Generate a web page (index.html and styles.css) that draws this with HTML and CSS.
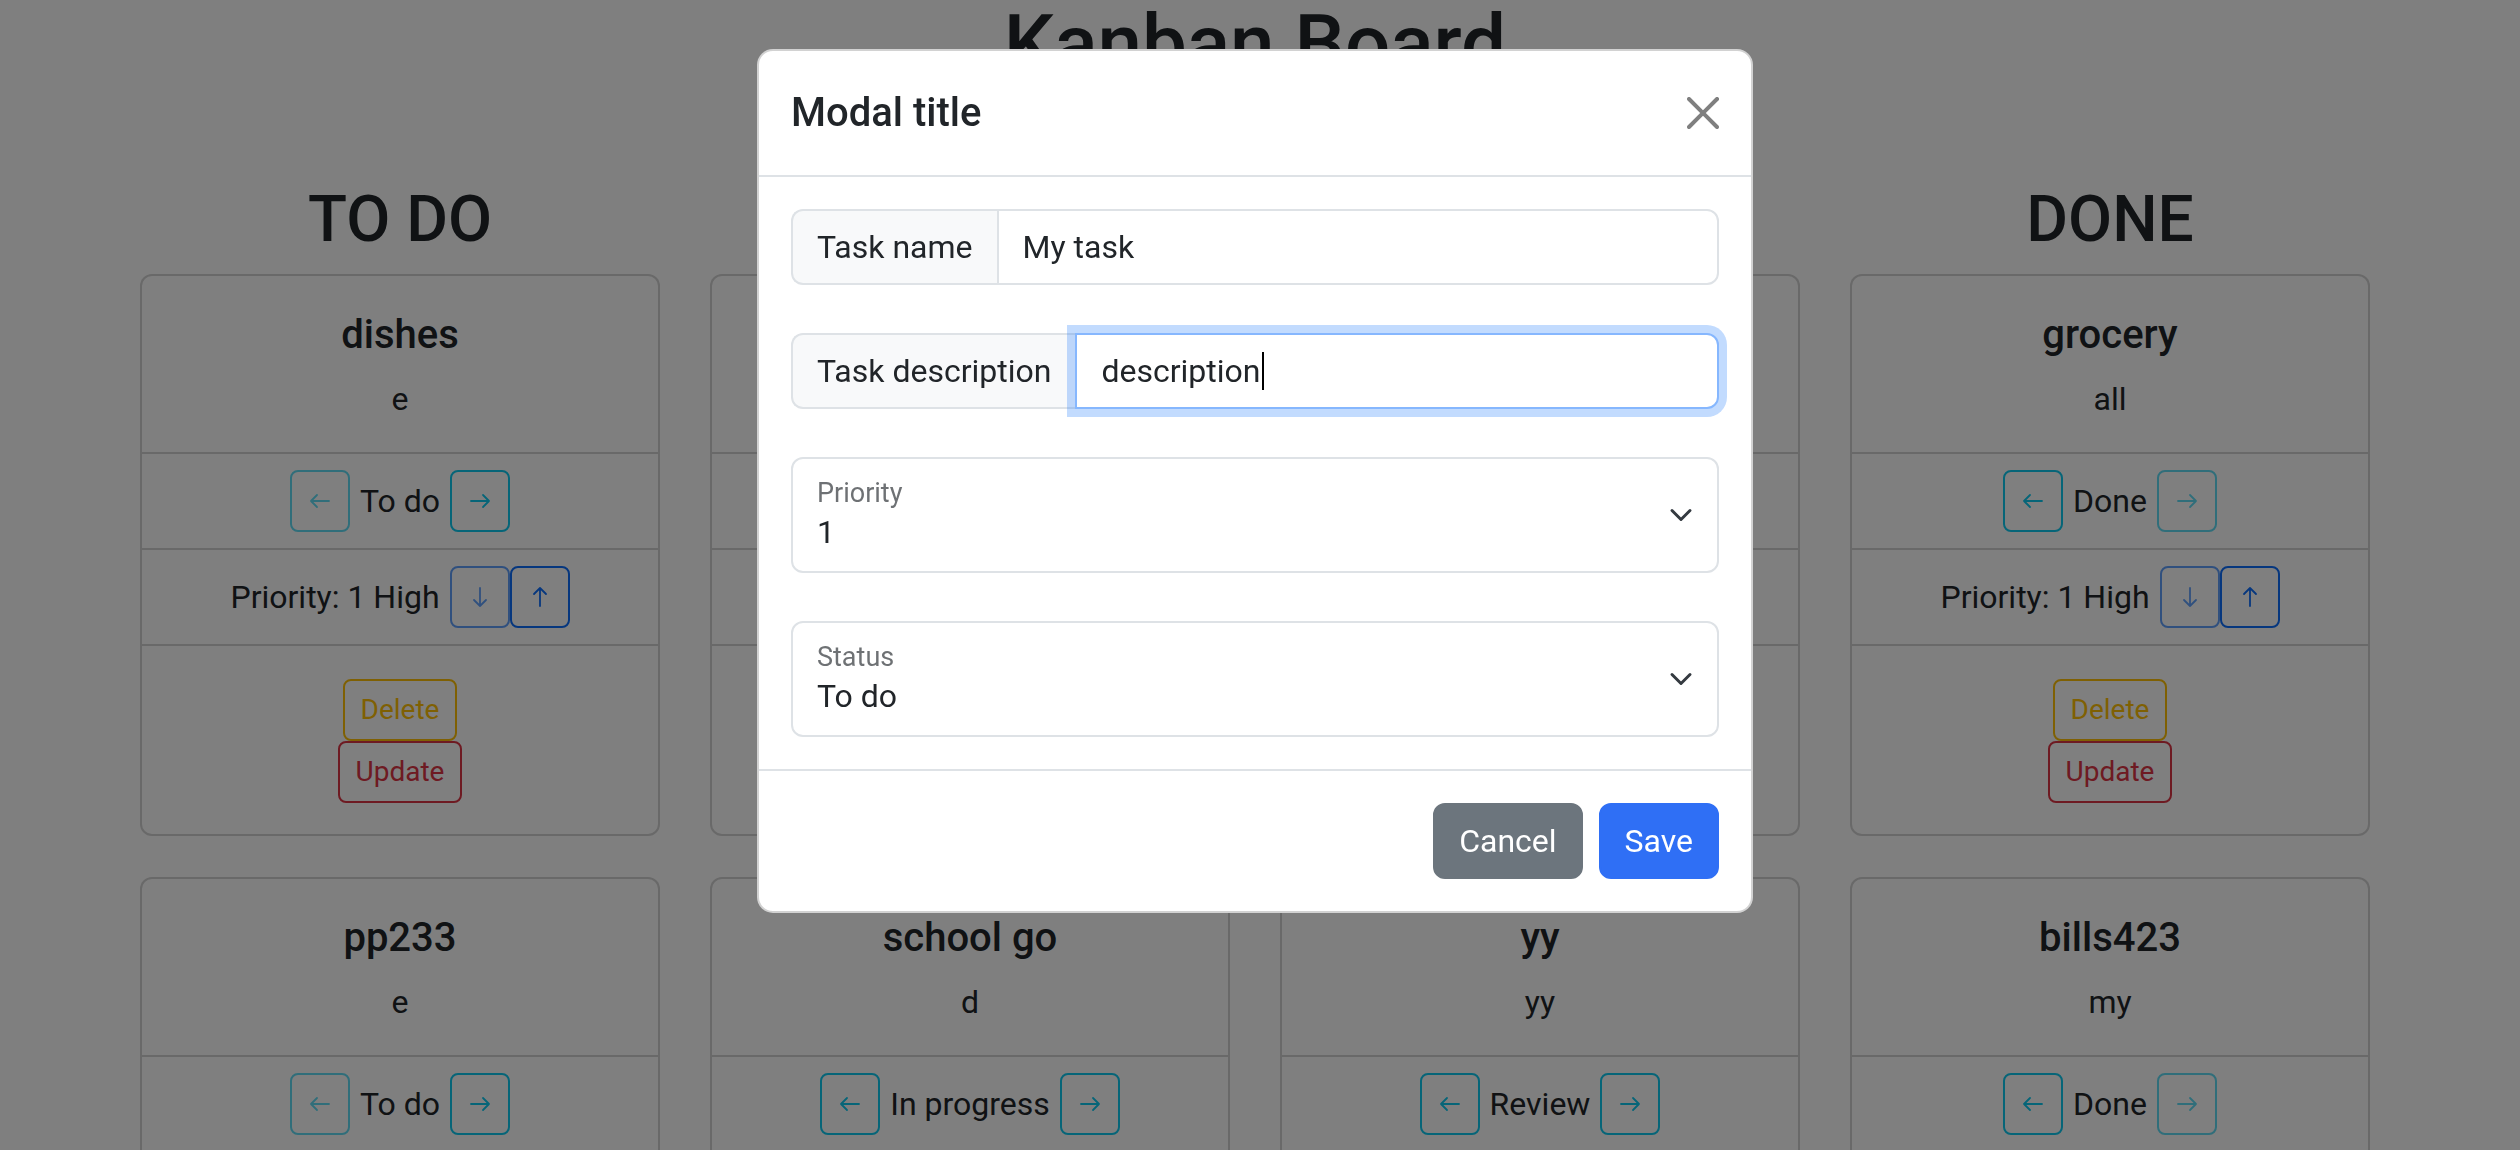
FILE: index.html
```html
<!DOCTYPE html>
<html lang="en">
<head>
<meta charset="utf-8">
<title>Kanban Board</title>
<link rel="stylesheet" href="styles.css">
</head>
<body>
<div class="page">
  <h1 class="page-title">Kanban Board</h1>
  <div class="board">
    <section class="column">
      <h2 class="column-title">TO DO</h2>
      <div class="card">
        <div class="card-body">
          <h5 class="card-title">dishes</h5>
          <p class="card-text">e</p>
        </div>
        <div class="list-group">
          <div class="list-item">
            <button class="btn btn-sm btn-arrow info disabled"><svg viewBox="0 0 24 24" width="24" height="24"><path d="M21 12H3M9 6l-6 6 6 6" fill="none" stroke="currentColor" stroke-width="1.8" stroke-linecap="round" stroke-linejoin="round"/></svg></button>
            <span>To do</span>
            <button class="btn btn-sm btn-arrow info"><svg viewBox="0 0 24 24" width="24" height="24"><path d="M3 12h18M15 6l6 6-6 6" fill="none" stroke="currentColor" stroke-width="1.8" stroke-linecap="round" stroke-linejoin="round"/></svg></button>
          </div>
          <div class="list-item">
            <span class="prio-text">Priority: 1 High</span>
            <span class="btn-pair">
              <button class="btn btn-sm btn-arrow primary disabled"><svg viewBox="0 0 24 24" width="24" height="24"><path d="M12 3v18M6 15l6 6 6-6" fill="none" stroke="currentColor" stroke-width="1.8" stroke-linecap="round" stroke-linejoin="round"/></svg></button>
              <button class="btn btn-sm btn-arrow primary"><svg viewBox="0 0 24 24" width="24" height="24"><path d="M12 21V3M6 9l6-6 6 6" fill="none" stroke="currentColor" stroke-width="1.8" stroke-linecap="round" stroke-linejoin="round"/></svg></button>
            </span>
          </div>
        </div>
        <div class="card-actions">
          <button class="btn btn-sm warning">Delete</button>
          <button class="btn btn-sm danger">Update</button>
        </div>
      </div>
      <div class="card">
        <div class="card-body">
          <h5 class="card-title">pp233</h5>
          <p class="card-text">e</p>
        </div>
        <div class="list-group">
          <div class="list-item">
            <button class="btn btn-sm btn-arrow info disabled"><svg viewBox="0 0 24 24" width="24" height="24"><path d="M21 12H3M9 6l-6 6 6 6" fill="none" stroke="currentColor" stroke-width="1.8" stroke-linecap="round" stroke-linejoin="round"/></svg></button>
            <span>To do</span>
            <button class="btn btn-sm btn-arrow info"><svg viewBox="0 0 24 24" width="24" height="24"><path d="M3 12h18M15 6l6 6-6 6" fill="none" stroke="currentColor" stroke-width="1.8" stroke-linecap="round" stroke-linejoin="round"/></svg></button>
          </div>
          <div class="list-item">
            <span class="prio-text">Priority: 2 Medium</span>
          </div>
        </div>
      </div>
    </section>

    <section class="column">
      <h2 class="column-title">IN PROGRESS</h2>
      <div class="card">
        <div class="card-body">
          <h5 class="card-title">cooking</h5>
          <p class="card-text">dinner</p>
        </div>
        <div class="list-group">
          <div class="list-item">
            <button class="btn btn-sm btn-arrow info"><svg viewBox="0 0 24 24" width="24" height="24"><path d="M21 12H3M9 6l-6 6 6 6" fill="none" stroke="currentColor" stroke-width="1.8" stroke-linecap="round" stroke-linejoin="round"/></svg></button>
            <span>In progress</span>
            <button class="btn btn-sm btn-arrow info"><svg viewBox="0 0 24 24" width="24" height="24"><path d="M3 12h18M15 6l6 6-6 6" fill="none" stroke="currentColor" stroke-width="1.8" stroke-linecap="round" stroke-linejoin="round"/></svg></button>
          </div>
          <div class="list-item">
            <span class="prio-text">Priority: 1 High</span>
            <span class="btn-pair">
              <button class="btn btn-sm btn-arrow primary disabled"><svg viewBox="0 0 24 24" width="24" height="24"><path d="M12 3v18M6 15l6 6 6-6" fill="none" stroke="currentColor" stroke-width="1.8" stroke-linecap="round" stroke-linejoin="round"/></svg></button>
              <button class="btn btn-sm btn-arrow primary"><svg viewBox="0 0 24 24" width="24" height="24"><path d="M12 21V3M6 9l6-6 6 6" fill="none" stroke="currentColor" stroke-width="1.8" stroke-linecap="round" stroke-linejoin="round"/></svg></button>
            </span>
          </div>
        </div>
        <div class="card-actions">
          <button class="btn btn-sm warning">Delete</button>
          <button class="btn btn-sm danger">Update</button>
        </div>
      </div>
      <div class="card">
        <div class="card-body">
          <h5 class="card-title">school go</h5>
          <p class="card-text">d</p>
        </div>
        <div class="list-group">
          <div class="list-item">
            <button class="btn btn-sm btn-arrow info"><svg viewBox="0 0 24 24" width="24" height="24"><path d="M21 12H3M9 6l-6 6 6 6" fill="none" stroke="currentColor" stroke-width="1.8" stroke-linecap="round" stroke-linejoin="round"/></svg></button>
            <span>In progress</span>
            <button class="btn btn-sm btn-arrow info"><svg viewBox="0 0 24 24" width="24" height="24"><path d="M3 12h18M15 6l6 6-6 6" fill="none" stroke="currentColor" stroke-width="1.8" stroke-linecap="round" stroke-linejoin="round"/></svg></button>
          </div>
          <div class="list-item">
            <span class="prio-text">Priority: 2 Medium</span>
          </div>
        </div>
      </div>
    </section>

    <section class="column">
      <h2 class="column-title">REVIEW</h2>
      <div class="card">
        <div class="card-body">
          <h5 class="card-title">laundry</h5>
          <p class="card-text">wash</p>
        </div>
        <div class="list-group">
          <div class="list-item">
            <button class="btn btn-sm btn-arrow info"><svg viewBox="0 0 24 24" width="24" height="24"><path d="M21 12H3M9 6l-6 6 6 6" fill="none" stroke="currentColor" stroke-width="1.8" stroke-linecap="round" stroke-linejoin="round"/></svg></button>
            <span>Review</span>
            <button class="btn btn-sm btn-arrow info"><svg viewBox="0 0 24 24" width="24" height="24"><path d="M3 12h18M15 6l6 6-6 6" fill="none" stroke="currentColor" stroke-width="1.8" stroke-linecap="round" stroke-linejoin="round"/></svg></button>
          </div>
          <div class="list-item">
            <span class="prio-text">Priority: 1 High</span>
            <span class="btn-pair">
              <button class="btn btn-sm btn-arrow primary disabled"><svg viewBox="0 0 24 24" width="24" height="24"><path d="M12 3v18M6 15l6 6 6-6" fill="none" stroke="currentColor" stroke-width="1.8" stroke-linecap="round" stroke-linejoin="round"/></svg></button>
              <button class="btn btn-sm btn-arrow primary"><svg viewBox="0 0 24 24" width="24" height="24"><path d="M12 21V3M6 9l6-6 6 6" fill="none" stroke="currentColor" stroke-width="1.8" stroke-linecap="round" stroke-linejoin="round"/></svg></button>
            </span>
          </div>
        </div>
        <div class="card-actions">
          <button class="btn btn-sm warning">Delete</button>
          <button class="btn btn-sm danger">Update</button>
        </div>
      </div>
      <div class="card">
        <div class="card-body">
          <h5 class="card-title">yy</h5>
          <p class="card-text">yy</p>
        </div>
        <div class="list-group">
          <div class="list-item">
            <button class="btn btn-sm btn-arrow info"><svg viewBox="0 0 24 24" width="24" height="24"><path d="M21 12H3M9 6l-6 6 6 6" fill="none" stroke="currentColor" stroke-width="1.8" stroke-linecap="round" stroke-linejoin="round"/></svg></button>
            <span>Review</span>
            <button class="btn btn-sm btn-arrow info"><svg viewBox="0 0 24 24" width="24" height="24"><path d="M3 12h18M15 6l6 6-6 6" fill="none" stroke="currentColor" stroke-width="1.8" stroke-linecap="round" stroke-linejoin="round"/></svg></button>
          </div>
          <div class="list-item">
            <span class="prio-text">Priority: 2 Medium</span>
          </div>
        </div>
      </div>
    </section>

    <section class="column">
      <h2 class="column-title">DONE</h2>
      <div class="card">
        <div class="card-body">
          <h5 class="card-title">grocery</h5>
          <p class="card-text">all</p>
        </div>
        <div class="list-group">
          <div class="list-item">
            <button class="btn btn-sm btn-arrow info"><svg viewBox="0 0 24 24" width="24" height="24"><path d="M21 12H3M9 6l-6 6 6 6" fill="none" stroke="currentColor" stroke-width="1.8" stroke-linecap="round" stroke-linejoin="round"/></svg></button>
            <span>Done</span>
            <button class="btn btn-sm btn-arrow info disabled"><svg viewBox="0 0 24 24" width="24" height="24"><path d="M3 12h18M15 6l6 6-6 6" fill="none" stroke="currentColor" stroke-width="1.8" stroke-linecap="round" stroke-linejoin="round"/></svg></button>
          </div>
          <div class="list-item">
            <span class="prio-text">Priority: 1 High</span>
            <span class="btn-pair">
              <button class="btn btn-sm btn-arrow primary disabled"><svg viewBox="0 0 24 24" width="24" height="24"><path d="M12 3v18M6 15l6 6 6-6" fill="none" stroke="currentColor" stroke-width="1.8" stroke-linecap="round" stroke-linejoin="round"/></svg></button>
              <button class="btn btn-sm btn-arrow primary"><svg viewBox="0 0 24 24" width="24" height="24"><path d="M12 21V3M6 9l6-6 6 6" fill="none" stroke="currentColor" stroke-width="1.8" stroke-linecap="round" stroke-linejoin="round"/></svg></button>
            </span>
          </div>
        </div>
        <div class="card-actions">
          <button class="btn btn-sm warning">Delete</button>
          <button class="btn btn-sm danger">Update</button>
        </div>
      </div>
      <div class="card">
        <div class="card-body">
          <h5 class="card-title">bills423</h5>
          <p class="card-text">my</p>
        </div>
        <div class="list-group">
          <div class="list-item">
            <button class="btn btn-sm btn-arrow info"><svg viewBox="0 0 24 24" width="24" height="24"><path d="M21 12H3M9 6l-6 6 6 6" fill="none" stroke="currentColor" stroke-width="1.8" stroke-linecap="round" stroke-linejoin="round"/></svg></button>
            <span>Done</span>
            <button class="btn btn-sm btn-arrow info disabled"><svg viewBox="0 0 24 24" width="24" height="24"><path d="M3 12h18M15 6l6 6-6 6" fill="none" stroke="currentColor" stroke-width="1.8" stroke-linecap="round" stroke-linejoin="round"/></svg></button>
          </div>
          <div class="list-item">
            <span class="prio-text">Priority: 2 Medium</span>
          </div>
        </div>
      </div>
    </section>
  </div>
</div>

<div class="backdrop"></div>

<div class="modal">
  <div class="modal-header">
    <h1 class="modal-title">Modal title</h1>
    <button class="btn-close" aria-label="Close"><svg viewBox="0 0 16 16" width="32" height="32"><path d="M.293.293a1 1 0 0 1 1.414 0L8 6.586 14.293.293a1 1 0 1 1 1.414 1.414L9.414 8l6.293 6.293a1 1 0 0 1-1.414 1.414L8 9.414l-6.293 6.293a1 1 0 0 1-1.414-1.414L6.586 8 .293 1.707a1 1 0 0 1 0-1.414z" fill="currentColor"/></svg></button>
  </div>
  <div class="modal-body">
    <div class="input-group">
      <span class="addon">Task name</span>
      <div class="input">My task</div>
    </div>
    <div class="input-group">
      <span class="addon">Task description</span>
      <div class="input focused">description<span class="caret"></span></div>
    </div>
    <div class="floating-select">
      <div class="fs-text">
        <span class="fs-label">Priority</span>
        <span class="fs-value">1</span>
      </div>
      <svg class="chevron" viewBox="0 0 16 16" width="24" height="24"><path d="m2 5 6 6 6-6" fill="none" stroke="#343a40" stroke-width="2" stroke-linecap="round" stroke-linejoin="round"/></svg>
    </div>
    <div class="floating-select">
      <div class="fs-text">
        <span class="fs-label">Status</span>
        <span class="fs-value">To do</span>
      </div>
      <svg class="chevron" viewBox="0 0 16 16" width="24" height="24"><path d="m2 5 6 6 6-6" fill="none" stroke="#343a40" stroke-width="2" stroke-linecap="round" stroke-linejoin="round"/></svg>
    </div>
  </div>
  <div class="modal-footer">
    <button class="btn btn-secondary">Cancel</button>
    <button class="btn btn-primary">Save</button>
  </div>
</div>
</body>
</html>
```

FILE: styles.css
```css
* { box-sizing: border-box; }

html, body {
  margin: 0;
  height: 100%;
  overflow: hidden;
}

body {
  font-family: Roboto, "Liberation Sans", sans-serif;
  font-size: 32px;
  line-height: 48px;
  color: #212529;
  background: #fff;
}

.page {
  width: 2230px;
  margin-left: 140px;
}

.page-title {
  margin: -4px 0 89px;
  font-size: 80px;
  font-weight: 500;
  line-height: 96px;
  text-align: center;
}

.board {
  display: grid;
  grid-template-columns: repeat(4, 520px);
  column-gap: 50px;
}

.column {
  display: flex;
  flex-direction: column;
  gap: 41px;
}

.column-title {
  margin: 0 0 -25px;
  font-size: 64px;
  font-weight: 500;
  line-height: 77px;
  text-align: center;
}

.card {
  border: 2px solid rgba(0, 0, 0, 0.175);
  border-radius: 12px;
  text-align: center;
  background: #fff;
}

.card-body {
  padding: 35px 32px 29px;
}

.card-title {
  margin: 0 0 16px;
  font-size: 40px;
  font-weight: 500;
  line-height: 48px;
}

.card-text {
  margin: 0;
}

.list-group {
  border-top: 2px solid rgba(0, 0, 0, 0.175);
  border-bottom: 2px solid rgba(0, 0, 0, 0.175);
}

.list-item {
  display: flex;
  align-items: center;
  justify-content: center;
  gap: 10px;
  padding: 16px 32px;
  min-height: 94px;
}

.list-item + .list-item {
  border-top: 2px solid rgba(0, 0, 0, 0.175);
}

.btn-pair {
  display: inline-flex;
}

.card-actions {
  display: flex;
  flex-direction: column;
  align-items: center;
  padding: 33px 32px 31px;
}

.btn {
  display: inline-flex;
  align-items: center;
  justify-content: center;
  font-family: inherit;
  font-size: 32px;
  line-height: 48px;
  padding: 12px 24px;
  border: 2px solid transparent;
  border-radius: 12px;
  background: transparent;
  cursor: pointer;
}

.btn-sm {
  font-size: 28px;
  line-height: 42px;
  padding: 8px 16px;
  border-radius: 8px;
}

.btn-arrow {
  width: 60px;
  height: 62px;
  padding: 0;
}

.btn-arrow svg {
  display: block;
}

.info {
  color: #0dcaf0;
  border-color: #0dcaf0;
}

.primary {
  color: #0d6efd;
  border-color: #0d6efd;
}

.warning {
  color: #ffc107;
  border-color: #ffc107;
}

.danger {
  color: #dc3545;
  border-color: #dc3545;
}

.disabled {
  opacity: 0.65;
}

.backdrop {
  position: fixed;
  inset: 0;
  background: rgba(0, 0, 0, 0.5);
}

.modal {
  position: fixed;
  top: 49px;
  left: 757px;
  width: 996px;
  background: #fff;
  border: 2px solid rgba(0, 0, 0, 0.175);
  border-radius: 16px;
}

.modal-header {
  display: flex;
  align-items: center;
  justify-content: space-between;
  padding: 32px;
  border-bottom: 2px solid #dee2e6;
}

.modal-title {
  margin: 0;
  font-size: 40px;
  font-weight: 500;
  line-height: 60px;
}

.btn-close {
  display: flex;
  padding: 16px;
  margin: -16px -16px -16px auto;
  border: 0;
  background: transparent;
  color: rgba(0, 0, 0, 0.5);
}

.modal-body {
  display: flex;
  flex-direction: column;
  gap: 48px;
  padding: 32px;
}

.input-group {
  display: flex;
  height: 76px;
}

.addon {
  padding: 12px 24px;
  background: #f8f9fa;
  border: 2px solid #dee2e6;
  border-right: 0;
  border-radius: 12px 0 0 12px;
  white-space: nowrap;
}

.input {
  flex: 1;
  display: flex;
  align-items: center;
  padding: 12px 24px;
  border: 2px solid #dee2e6;
  border-radius: 0 12px 12px 0;
  background: #fff;
}

.input.focused {
  position: relative;
  border-color: #86b7fe;
  box-shadow: 0 0 0 8px rgba(13, 110, 253, 0.25);
}

.caret {
  display: inline-block;
  width: 2px;
  height: 38px;
  margin-left: 1px;
  background: #000;
}

.floating-select {
  display: flex;
  align-items: center;
  height: 116px;
  padding: 0 24px;
  border: 2px solid #dee2e6;
  border-radius: 12px;
}

.fs-text {
  flex: 1;
  display: flex;
  flex-direction: column;
  align-self: flex-start;
  padding-top: 21px;
}

.fs-label {
  font-size: 27px;
  line-height: 27px;
  color: rgba(33, 37, 41, 0.65);
}

.fs-value {
  margin-top: 9px;
  font-size: 32px;
  line-height: 32px;
}

.chevron {
  display: block;
}

.modal-footer {
  display: flex;
  justify-content: flex-end;
  padding: 24px;
  border-top: 2px solid #dee2e6;
}

.modal-footer .btn {
  margin: 8px;
}

.btn-secondary {
  color: #fff;
  background: #6c757d;
  border-color: #6c757d;
}

.btn-primary {
  color: #fff;
  background: #2f6ff5;
  border-color: #2f6ff5;
}
```
